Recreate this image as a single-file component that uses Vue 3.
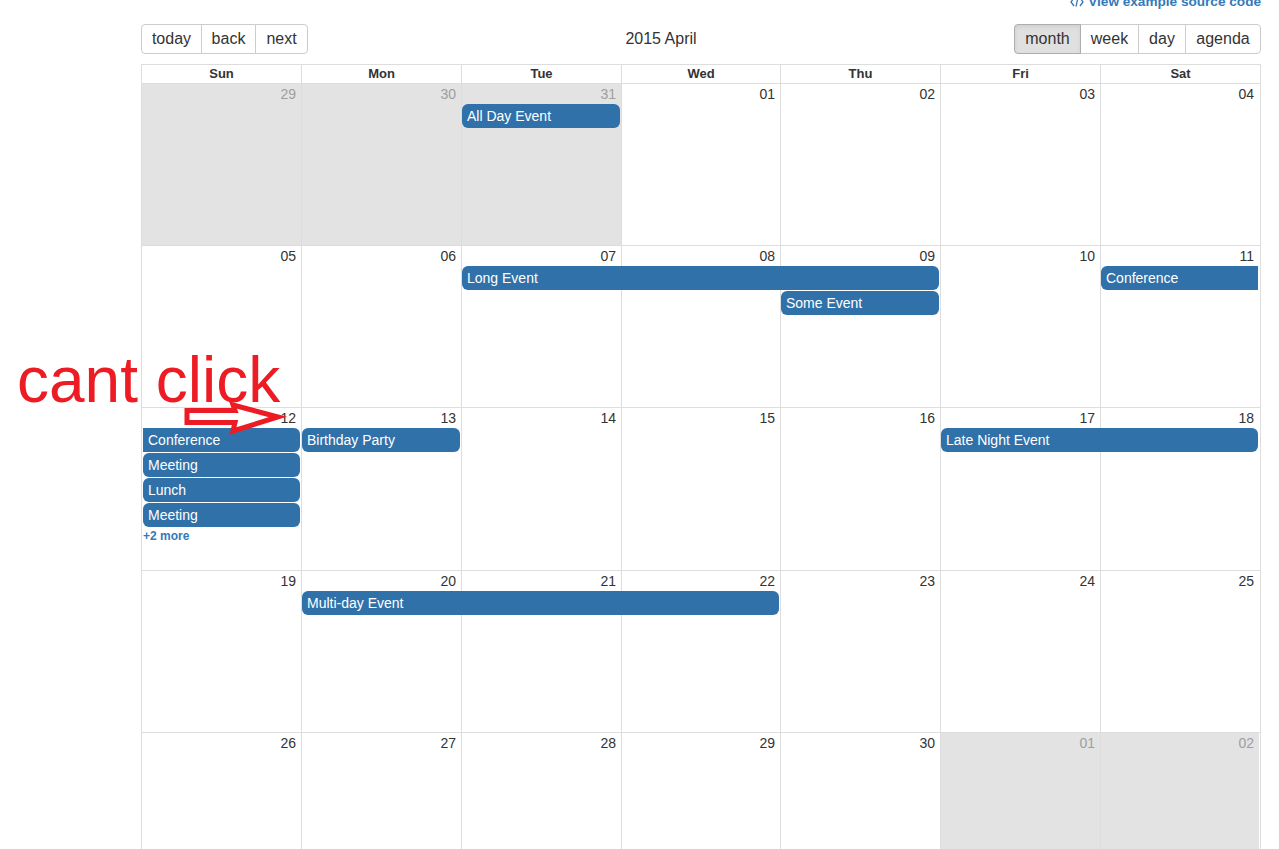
<script setup>
const headers = ['Sun', 'Mon', 'Tue', 'Wed', 'Thu', 'Fri', 'Sat']
const weeks = [
  {
    cls: 'w162',
    days: [['29', 1], ['30', 1], ['31', 1], ['01'], ['02'], ['03'], ['04']],
    events: [{ label: 'All Day Event', col: 3, span: 1, row: 2 }]
  },
  {
    cls: 'w162',
    days: [['05'], ['06'], ['07'], ['08'], ['09'], ['10'], ['11']],
    events: [
      { label: 'Long Event', col: 3, span: 3, row: 2 },
      { label: 'Some Event', col: 5, span: 1, row: 3 },
      { label: 'Conference', col: 7, span: 1, row: 2, open: 'right' }
    ]
  },
  {
    cls: 'w163',
    days: [['12'], ['13'], ['14'], ['15'], ['16'], ['17'], ['18']],
    events: [
      { label: 'Conference', col: 1, span: 1, row: 2, open: 'left' },
      { label: 'Meeting', col: 1, span: 1, row: 3 },
      { label: 'Lunch', col: 1, span: 1, row: 4 },
      { label: 'Meeting', col: 1, span: 1, row: 5 },
      { label: 'Birthday Party', col: 2, span: 1, row: 2 },
      { label: 'Late Night Event', col: 6, span: 2, row: 2 }
    ],
    more: '+2 more'
  },
  {
    cls: 'w162',
    days: [['19'], ['20'], ['21'], ['22'], ['23'], ['24'], ['25']],
    events: [{ label: 'Multi-day Event', col: 2, span: 3, row: 2 }]
  },
  {
    cls: 'w162',
    days: [['26'], ['27'], ['28'], ['29'], ['30'], ['01', 1], ['02', 1]],
    events: []
  }
]
</script>

<template>
  <div class="page">
    <div class="source">
      <a class="source-link">
        <svg class="code-icon" width="14" height="10" viewBox="0 0 14 10" aria-hidden="true">
          <path d="M4 1 L1 5 L4 9 M10 1 L13 5 L10 9 M8 0.5 L6 9.5" fill="none" stroke="#337ab7" stroke-width="1.3" />
        </svg>
        <span>View example source code</span>
      </a>
    </div>

    <div class="toolbar">
      <div class="btn-group">
        <button class="btn w-today">today</button>
        <button class="btn w-back">back</button>
        <button class="btn w-next">next</button>
      </div>
      <div class="title">2015 April</div>
      <div class="btn-group">
        <button class="btn w-month active">month</button>
        <button class="btn w-week">week</button>
        <button class="btn w-day">day</button>
        <button class="btn w-agenda">agenda</button>
      </div>
    </div>

    <div class="calendar">
      <div class="head cols">
        <div v-for="h in headers" :key="h" class="head-cell">{{ h }}</div>
      </div>
      <div v-for="(w, wi) in weeks" :key="wi" class="week cols" :class="w.cls">
        <div
          v-for="(d, di) in w.days"
          :key="di"
          class="cell"
          :class="{ other: d[1] }"
          :style="{ gridColumn: di + 1 }"
        >{{ d[0] }}</div>
        <div
          v-for="(e, ei) in w.events"
          :key="ei"
          class="event"
          :class="[e.open ? 'open-' + e.open : '', e.col === 1 ? 'first' : '']"
          :style="{ gridColumn: e.col + ' / span ' + e.span, gridRow: e.row }"
        >{{ e.label }}</div>
        <a v-if="w.more" class="more">{{ w.more }}</a>
      </div>
    </div>

    <div class="note">cant click</div>
    <svg class="arrow" width="110" height="40" viewBox="180 400 110 40" aria-hidden="true">
      <polygon
        points="187,410.5 235,410.5 233,405 278,417 233,431 235,422.5 187,422.5"
        fill="none"
        stroke="#ed1c24"
        stroke-width="5"
      />
    </svg>
  </div>
</template>

<style>
html, body {
  margin: 0;
  background: #fff;
}
</style>

<style scoped>
.page {
  position: relative;
  box-sizing: border-box;
  width: 1279px;
  height: 849px;
  overflow: hidden;
  padding-left: 141px;
  padding-right: 18px;
  font-family: "Liberation Sans", Arial, sans-serif;
  font-size: 14px;
  color: #333;
}

.source {
  display: flex;
  justify-content: flex-end;
  height: 24px;
  font-size: 13.6px;
  font-weight: 700;
  color: #337ab7;
}

.source-link {
  display: flex;
  align-items: center;
  gap: 4px;
  height: 3px;
  line-height: 3px;
  white-space: nowrap;
}

.toolbar {
  display: flex;
  justify-content: space-between;
  align-items: center;
  height: 30px;
  margin-bottom: 10px;
}

.title {
  font-size: 16px;
}

.btn-group {
  display: flex;
}

.btn {
  height: 30px;
  margin: 0 0 0 -1px;
  padding: 0;
  border: 1px solid #ccc;
  background: #fff;
  color: #333;
  font-family: inherit;
  font-size: 16px;
  line-height: 28px;
}

.w-today { width: 61px; }
.w-back { width: 55px; }
.w-next { width: 53px; }
.w-month { width: 67px; }
.w-week { width: 59px; }
.w-day { width: 48px; }
.w-agenda { width: 76px; }

.btn:first-child {
  margin-left: 0;
  border-radius: 4px 0 0 4px;
}

.btn:last-child {
  border-radius: 0 4px 4px 0;
}

.btn.active {
  position: relative;
  background: #e0e0e0;
  border-color: #adadad;
  box-shadow: inset 0 2px 4px rgba(0, 0, 0, 0.08);
}

.calendar {
  border-left: 1px solid #ddd;
  border-right: 1px solid #ddd;
}

.cols {
  display: grid;
  grid-template-columns: 160px 160px 160px 159px 160px 160px 159px;
}

.head {
  box-sizing: border-box;
  height: 20px;
  border-top: 1px solid #ddd;
  border-bottom: 1px solid #ddd;
}

.head-cell {
  border-right: 1px solid #ddd;
  text-align: center;
  font-size: 13px;
  font-weight: 700;
  line-height: 18px;
}

.head-cell:last-child {
  border-right: 0;
}

.week {
  box-sizing: border-box;
  border-bottom: 1px solid #ddd;
  grid-template-rows: 20px repeat(4, 25px) 1fr;
}

.w162 {
  height: 162px;
}

.w163 {
  height: 163px;
}

.cell {
  grid-row: 1 / -1;
  padding-right: 5px;
  border-right: 1px solid #ddd;
  text-align: right;
  line-height: 20px;
}

.cell:nth-child(7) {
  border-right-color: #fff;
}

.cell.other {
  background: #e3e3e3;
  color: #9e9e9e;
}

.event {
  box-sizing: border-box;
  height: 24px;
  margin-right: 2px;
  padding-left: 5px;
  border-radius: 6px;
  background: #3071a9;
  color: #fff;
  line-height: 24px;
  white-space: nowrap;
}

.event.first {
  margin-left: 1px;
}

.event.open-left {
  border-radius: 0 6px 6px 0;
}

.event.open-right {
  border-radius: 6px 0 0 6px;
}

.more {
  grid-column: 1;
  grid-row: 6;
  align-self: start;
  margin-left: 1px;
  color: #337ab7;
  font-size: 12px;
  font-weight: 700;
  line-height: 17px;
}

.note {
  position: absolute;
  left: 17px;
  top: 343px;
  color: #ed1c24;
  font-size: 64px;
  line-height: 74px;
  white-space: nowrap;
}

.arrow {
  position: absolute;
  left: 180px;
  top: 400px;
}
</style>
